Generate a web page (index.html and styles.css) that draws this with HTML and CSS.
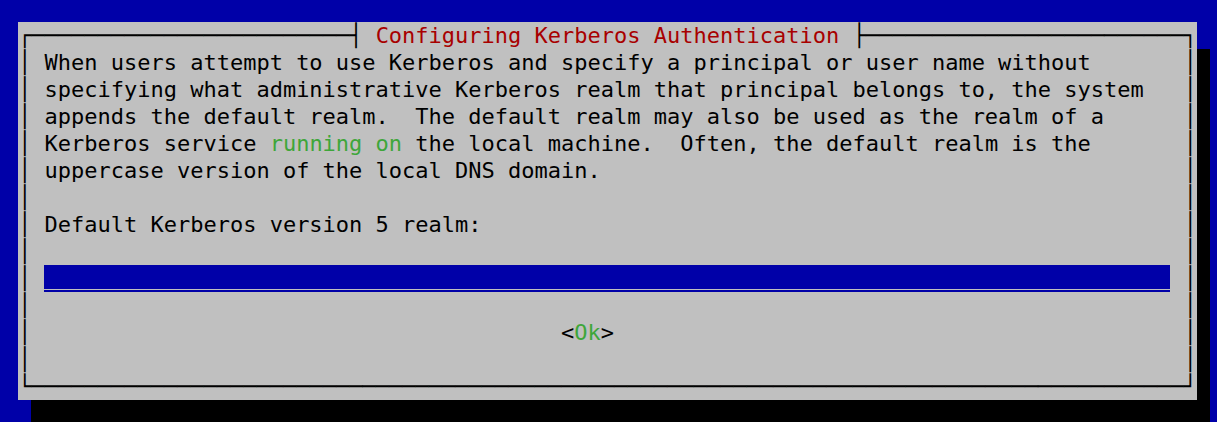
FILE: index.html
```html
<!DOCTYPE html>
<html>
<head>
<meta charset="utf-8">
<title>Package configuration</title>
<link rel="stylesheet" href="styles.css">
</head>
<body>

<div class="dialog">
  <!-- top edge with the title set into it -->
  <div class="line">┌────────────────────────┤ <span class="title">Configuring Kerberos Authentication</span> ├────────────────────────┐</div>

  <div class="row"><span class="edge">│</span><div class="cell">When users attempt to use Kerberos and specify a principal or user name without</div><span class="edge">│</span></div>
  <div class="row"><span class="edge">│</span><div class="cell">specifying what administrative Kerberos realm that principal belongs to, the system</div><span class="edge">│</span></div>
  <div class="row"><span class="edge">│</span><div class="cell">appends the default realm.  The default realm may also be used as the realm of a</div><span class="edge">│</span></div>
  <div class="row"><span class="edge">│</span><div class="cell">Kerberos service <span class="hl">running on</span> the local machine.  Often, the default realm is the</div><span class="edge">│</span></div>
  <div class="row"><span class="edge">│</span><div class="cell">uppercase version of the local DNS domain.</div><span class="edge">│</span></div>
  <div class="row"><span class="edge">│</span><div class="cell"></div><span class="edge">│</span></div>
  <div class="row"><span class="edge">│</span><div class="cell">Default Kerberos version 5 realm:</div><span class="edge">│</span></div>
  <div class="row"><span class="edge">│</span><div class="cell"></div><span class="edge">│</span></div>

  <!-- entry field -->
  <div class="row"><span class="edge">│</span><div class="cell"><span class="field"></span></div><span class="edge">│</span></div>

  <div class="row"><span class="edge">│</span><div class="cell"></div><span class="edge">│</span></div>
  <div class="row"><span class="edge">│</span><div class="cell buttons">&lt;<span class="hl">Ok</span>&gt;</div><span class="edge">│</span></div>
  <div class="row"><span class="edge">│</span><div class="cell"></div><span class="edge">│</span></div>

  <div class="line">└───────────────────────────────────────────────────────────────────────────────────────┘</div>
</div>

</body>
</html>
```

FILE: styles.css
```css
* {box-sizing: border-box;}

body {
  margin: 0;
  height: 422px;
  overflow: hidden;
  background: #0000a8; /* terminal blue */
  color: #000;
  font-family: "DejaVu Sans Mono", monospace;
  font-size: 22px;
  line-height: 27px;
}

/* grey window, 89 columns x 14 rows, with a one-cell black shadow */
.dialog {
  margin: 22px 0 0 18px;
  width: 89ch;
  background: #c0c0c0;
  box-shadow: 13px 27px 0 #000;
}

.line {
  height: 27px;
  white-space: pre;
}

.title {
  color: #a80000;
}

.row {
  display: flex;
  height: 27px;
}

.edge {
  width: 1ch;
  white-space: pre;
}

.cell {
  flex: 1;
  padding-left: 1ch;
  white-space: pre;
}

.hl {
  color: #3ea63a;
}

.field {
  display: inline-block;
  vertical-align: top;
  width: 85ch;
  height: 27px;
  /* filled input with the underline just below it */
  background: linear-gradient(#0000a8 0 24px, transparent 24px 25px, #0000a8 25px 27px);
}

.buttons {
  padding-left: 40ch;
}
```
